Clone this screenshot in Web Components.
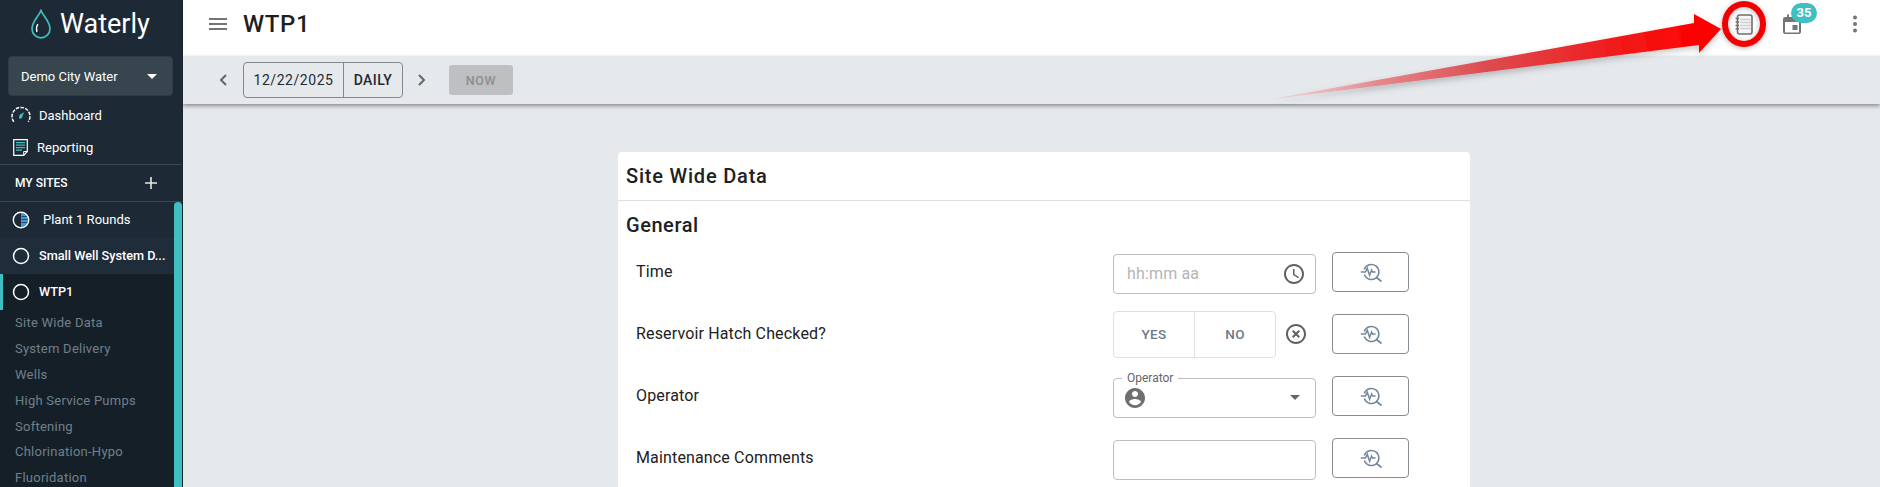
<!DOCTYPE html>
<html>
<head>
<meta charset="utf-8">
<title>Waterly</title>
<style>
  html, body { margin: 0; height: 487px; overflow: hidden; background: #e6e9ec; font-family: Roboto, "Liberation Sans", sans-serif; }
  #shell { display: grid; grid-template-columns: 183px 1fr; height: 487px; position: relative; }
  #main { display: flex; flex-direction: column; min-width: 0; height: 487px; overflow: hidden; }
</style>
</head>
<body>
<div id="shell">
  <app-sidebar>
    <nav-link icon="gauge" pad="11" gap="8">Dashboard</nav-link>
    <nav-link icon="report" pad="13" gap="9">Reporting</nav-link>
    <sites-head>MY SITES</sites-head>
    <site-row icon="half" gap="13">Plant 1 Rounds</site-row>
    <site-row icon="ring" strong hovered>Small Well System D...</site-row>
    <site-row icon="ring" strong active>WTP1</site-row>
    <site-menu>
      <span>Site Wide Data</span>
      <span>System Delivery</span>
      <span>Wells</span>
      <span>High Service Pumps</span>
      <span>Softening</span>
      <span>Chlorination-Hypo</span>
      <span>Fluoridation</span>
    </site-menu>
  </app-sidebar>
  <div id="main">
    <top-bar>WTP1</top-bar>
    <date-bar></date-bar>
    <data-sheet title="Site Wide Data" section="General">
      <form-row label="Time"><time-field></time-field></form-row>
      <form-row label="Reservoir Hatch Checked?"><yes-no></yes-no></form-row>
      <form-row label="Operator"><operator-select></operator-select></form-row>
      <form-row label="Maintenance Comments"><text-box></text-box></form-row>
    </data-sheet>
  </div>
  <callout-arrow></callout-arrow>
</div>

<script>
const icons = {
  gauge: `<svg width="20" height="20" viewBox="0 0 20 20" fill="none"><path d="M2.800 16.800A9 9 0 1 1 17.200 16.800" stroke="#fff" stroke-width="1.500" stroke-dasharray="3.500 1.300"/><path d="M7.800 13l.9-3.300L13 7.200l-1.700 4.500a2 2 0 0 1-3.500 1.300z" fill="#3fbfc1"/></svg>`,
  report: `<svg width="15" height="17" viewBox="0 0 15 17" fill="none"><path d="M.7.7h13.6v11.8l-3.6 3.8H.7z" stroke="#fff" stroke-width="1.2"/><path d="M10.7 16.3v-3.8h3.6" stroke="#fff" stroke-width="1"/><path d="M3 3.7h9M3 6.2h9M3 8.7h9M3 11.2h6" stroke="#3fbfc1" stroke-width="1.2"/></svg>`,
  half: `<svg width="18" height="18" viewBox="0 0 18 18" fill="none"><path d="M9 2v14a7 7 0 0 0 0-14z" fill="#3a9be0"/><path d="M9.500 5.500h7M9.500 8.500h7M9.500 11.500h7" stroke="#1d2a36" stroke-width=".7"/><circle cx="9" cy="9" r="7.700" stroke="#fff" stroke-width="1.400"/></svg>`,
  ring: `<svg width="18" height="18" viewBox="0 0 18 18" fill="none"><circle cx="9" cy="9" r="7.500" stroke="#fff" stroke-width="1.500"/></svg>`,
  clock: `<svg width="24" height="24" viewBox="0 0 24 24" fill="#616161"><path d="M11.99 2C6.47 2 2 6.48 2 12s4.47 10 9.99 10C17.52 22 22 17.52 22 12S17.52 2 11.99 2zM12 20c-4.42 0-8-3.58-8-8s3.58-8 8-8 8 3.58 8 8-3.58 8-8 8z"/><path d="M12.5 7H11v6l5.25 3.15.75-1.23-4.5-2.67z"/></svg>`,
  clear: `<svg width="24" height="24" viewBox="0 0 24 24" fill="#616161"><path d="M14.59 8L12 10.59 9.41 8 8 9.41 10.59 12 8 14.59 9.41 16 12 13.41 14.59 16 16 14.59 13.41 12 16 9.41 14.59 8zM12 2C6.47 2 2 6.47 2 12s4.47 10 10 10 10-4.47 10-10S17.53 2 12 2zm0 18c-4.41 0-8-3.59-8-8s3.59-8 8-8 8 3.59 8 8-3.59 8-8 8z"/></svg>`,
  person: `<svg width="24" height="24" viewBox="0 0 24 24" fill="#6f6f6f"><path d="M12 2C6.48 2 2 6.48 2 12s4.48 10 10 10 10-4.48 10-10S17.52 2 12 2zm0 3c1.66 0 3 1.34 3 3s-1.34 3-3 3-3-1.34-3-3 1.34-3 3-3zm0 14.2c-2.5 0-4.71-1.28-6-3.22.03-1.99 4-3.08 6-3.08 1.99 0 5.97 1.09 6 3.08-1.29 1.94-3.5 3.22-6 3.22z"/></svg>`,
  trend: `<svg width="22" height="20" viewBox="0 0 22 20" fill="none" stroke="#74879a" stroke-width="1.500"><path d="M4.300 7.500A7.500 7.500 0 1 1 4.300 12.500"/><path d="M.8 10h4.700l1.800-3.800 2.300 7 2-5.200 1 2h3"/><path d="M16.500 15.500L21.500 19.500" stroke-width="1.700"/></svg>`,
  notebook: `<svg width="18" height="21" viewBox="0 0 18 21" fill="none"><rect x="2.500" y="1" width="14.500" height="19" rx="2" fill="#f6f6f6" stroke="#6f6f6f" stroke-width="1.600"/><path d="M5 5.500h11M5 8.500h11M5 11.500h11M5 14.500h11" stroke="#cfcfcf" stroke-width="1.300"/><path d="M.5 4.500h3.500M.5 8h3.500M.5 11.500h3.500M.5 15h3.500" stroke="#6f6f6f" stroke-width="1.600" stroke-dasharray="2 .5"/></svg>`,
  calendar: `<svg width="18" height="21" viewBox="0 0 18 21" fill="#757575"><path d="M4 .5h2v2.500h6V.5h2v2.500h2a2 2 0 0 1 2 2v13a2 2 0 0 1-2 2H2a2 2 0 0 1-2-2V5a2 2 0 0 1 2-2h2zM2 8v10.500h14V8z"/><rect x="9.500" y="11" width="5" height="5"/></svg>`,
  kebab: `<svg width="6" height="18" viewBox="0 0 6 18" fill="#757575"><circle cx="3" cy="2.500" r="2"/><circle cx="3" cy="9" r="2"/><circle cx="3" cy="15.500" r="2"/></svg>`
};

function define(name, css, html) {
  customElements.define(name, class extends HTMLElement {
    connectedCallback() {
      if (this.shadowRoot) return;
      this.attachShadow({ mode: "open" });
      const body = typeof html === "function" ? html(this) : html;
      this.shadowRoot.innerHTML = `<style>${css}</style>${body}`;
    }
  });
}

define("app-sidebar", `
  :host { display: block; position: relative; height: 487px; overflow: hidden; background: #1d2a36; color: #fff; border-right: 1px solid #1a2530; box-sizing: border-box; }
  .logo { height: 56px; display: flex; align-items: flex-start; padding: 9px 0 0 31px; box-sizing: border-box; gap: 9px; }
  .logo b { font-weight: 400; font-size: 27px; line-height: 30px; margin-top: 0; }
  .org { margin: 0 9px 3px 8px; height: 40px; background: #37454e; border-radius: 4px; display: flex; align-items: center; justify-content: space-between; padding: 0 15px 0 12px; font-size: 13px; font-weight: 400; border: 1px solid #2f3c46; box-sizing: border-box; }
  .org i { width: 0; height: 0; border: 5px solid transparent; border-top: 5px solid #fff; border-bottom: 0; }
  .thumb { position: absolute; left: 174px; top: 202px; bottom: 0; width: 8px; background: #3fbfc1; border-radius: 4px 4px 0 0; }
`, `
  <div class="logo">
    <svg width="20" height="30" viewBox="0 0 20 30" fill="none"><path d="M10 1.500C8 7 1 12.500 1 19.800a9 9 0 0 0 18 0C19 12.500 12 7 10 1.500z" stroke="#3fbfc1" stroke-width="1.700"/><path d="M6 23c-.9-2.500-.6-5.500.8-8" stroke="#fff" stroke-width="1.300"/></svg>
    <b>Waterly</b>
  </div>
  <div class="org">Demo City Water<i></i></div>
  <slot></slot>
  <div class="thumb"></div>
`);

define("nav-link", `
  :host { display: flex; align-items: center; height: 32.500px; font-size: 13px; font-weight: 400; color: #fff; width: 174px; }
  svg { display: block; flex: none; }
`, (el) => `<span style="display:flex;padding-left:${el.getAttribute("pad")}px;margin-right:${el.getAttribute("gap")}px">${icons[el.getAttribute("icon")]}</span><slot></slot>`);

define("sites-head", `
  :host { display: flex; align-items: center; justify-content: space-between; height: 36px; border-top: 1px solid #3a4650; border-bottom: 1px solid #3a4650; padding: 0 24px 0 15px; font-size: 12px; font-weight: 500; }
  svg { display: block; }
`, `<slot></slot><svg width="14" height="14" viewBox="0 0 14 14"><path d="M7 1v12M1 7h12" stroke="#e8e8e8" stroke-width="1.600"/></svg>`);

define("site-row", `
  :host { display: flex; align-items: center; height: 36px; width: 174px; box-sizing: border-box; padding: 0 0 1px 12px; font-size: 13px; font-weight: 400; color: #fff; white-space: nowrap; }
  :host([strong]) { font-weight: 500; font-size: 12.700px; }
  :host([hovered]) { background: #1f2c3a; }
  :host([active]) { background: #151f27; box-shadow: inset 3px 0 0 #3fbfc1; }
  span { display: flex; flex: none; }
`, (el) => `<span style="margin-right:${el.getAttribute("gap") || 9}px">${icons[el.getAttribute("icon")]}</span><slot></slot>`);

define("site-menu", `
  :host { display: block; background: #151f27; width: 174px; height: 177px; box-sizing: border-box; }
  ::slotted(span) { display: flex; align-items: center; height: 25.800px; padding-left: 15px; font-size: 13px; letter-spacing: .25px; color: #6f808c; }
`, `<slot></slot>`);

define("top-bar", `
  :host { display: flex; align-items: center; flex: none; height: 56px; box-sizing: border-box; padding: 0 0 8px 26px; background: #fff; position: relative; }
  .title { font-size: 24px; font-weight: 500; color: #1f1f1f; letter-spacing: .55px; margin-left: 16px; }
  .tools { margin-left: auto; display: flex; align-items: center; }
  .tool { display: flex; position: relative; }
  .badge { position: absolute; left: 8px; top: -11px; width: 26px; height: 20px; border-radius: 10px; background: #3fbfc1; color: #fff; font-size: 13px; font-weight: 700; display: flex; align-items: center; justify-content: center; }
  svg { display: block; }
`, `
  <svg width="18" height="12" viewBox="0 0 18 12" fill="#757575"><path d="M0 0h18v2H0zM0 5h18v2H0zM0 10h18v2H0z"/></svg>
  <span class="title"><slot></slot></span>
  <div class="tools">
    <span class="tool" style="margin-right:30px">${icons.notebook}</span>
    <span class="tool" style="margin-right:51px">${icons.calendar}<span class="badge">35</span></span>
    <span class="tool" style="margin-right:22px">${icons.kebab}</span>
  </div>
`);

define("date-bar", `
  :host { display: flex; align-items: center; flex: none; height: 48px; background: #e6e9ec; padding-left: 36px; box-shadow: 0 2px 4px rgba(0,0,0,.4); position: relative; box-sizing: border-box; }
  .range { display: flex; height: 36px; box-sizing: border-box; margin: 0 15px 0 16px; border: 1px solid #83898e; border-radius: 4px; font-size: 14px; color: #1f2a33; align-items: stretch; }
  .range span { display: flex; align-items: center; justify-content: center; }
  .date { width: 99px; border-right: 1px solid #83898e; letter-spacing: .55px; }
  .mode { width: 58px; font-weight: 500; font-size: 14px; letter-spacing: .4px; }
  .now { margin-left: 23px; width: 64px; height: 30px; border-radius: 3px; background: #bdbfc1; color: #8c8e90; font-size: 12.500px; font-weight: 500; letter-spacing: .6px; display: flex; align-items: center; justify-content: center; }
  svg { display: block; }
`, `
  <svg width="8" height="12" viewBox="0 0 8 12" fill="none"><path d="M7 1L2 6l5 5" stroke="#666" stroke-width="2"/></svg>
  <div class="range"><span class="date">12/22/2025</span><span class="mode">DAILY</span></div>
  <svg width="8" height="12" viewBox="0 0 8 12" fill="none"><path d="M1 1l5 5-5 5" stroke="#666" stroke-width="2"/></svg>
  <div class="now">NOW</div>
`);

define("data-sheet", `
  :host { display: block; flex: none; width: 852px; margin: 48px 0 0 435px; background: #fff; border-radius: 4px 4px 0 0; color: #212121; height: 360px; }
  h2, h3 { margin: 0; font-weight: 500; font-size: 20px; padding-left: 8px; }
  h2 { height: 48px; line-height: 48px; border-bottom: 1px solid #e0e0e0; letter-spacing: .8px; }
  h3 { height: 40px; line-height: 48px; letter-spacing: .55px; }
`, (el) => `<h2>${el.getAttribute("title")}</h2><h3>${el.getAttribute("section")}</h3><slot></slot>`);

define("form-row", `
  :host { display: grid; grid-template-columns: 477px 219px 77px; align-items: center; height: 62px; padding-left: 18px; font-size: 16px; letter-spacing: .15px; color: #212121; }
  .label { margin-bottom: 2px; }
  .cell { display: flex; }
  button { display: flex; align-items: center; justify-content: center; width: 77px; height: 40px; padding: 0; background: #fff; border: 1px solid #868e94; border-radius: 4px; }
  svg { display: block; }
`, (el) => `<div class="label">${el.getAttribute("label")}</div><div class="cell"><slot></slot></div><button>${icons.trend}</button>`);

const boxCss = `
  :host { display: flex; align-items: center; width: 203px; height: 40px; margin-top: 3px; box-sizing: border-box; border: 1px solid #bdbdbd; border-radius: 4px; position: relative; }
  svg { display: block; }
`;

define("time-field", boxCss + `
  :host { justify-content: space-between; padding: 0 9px 0 13px; }
  span { color: #b5b5b5; font-size: 16px; }
`, `<span>hh:mm aa</span>${icons.clock}`);

define("text-box", boxCss, ``);

define("operator-select", boxCss + `
  :host { padding: 0 15px 0 9px; justify-content: space-between; }
  label { position: absolute; left: 8px; top: -8px; background: #fff; padding: 0 5px; font-size: 12px; line-height: 14px; color: #666; letter-spacing: 0; }
  i { width: 0; height: 0; border: 5px solid transparent; border-top: 5px solid #666; border-bottom: 0; }
`, `<label>Operator</label>${icons.person}<i></i>`);

define("yes-no", `
  :host { display: flex; align-items: center; }
  .pair { display: flex; width: 163px; height: 47px; box-sizing: border-box; border: 1px solid #e0e0e0; border-radius: 4px; font-size: 13.500px; font-weight: 500; letter-spacing: .4px; color: #6d7a85; }
  .pair span { flex: 1; display: flex; align-items: center; justify-content: center; }
  .pair span + span { border-left: 1px solid #e0e0e0; }
  .x { display: flex; margin-left: 8px; }
`, `<div class="pair"><span>YES</span><span>NO</span></div><span class="x">${icons.clear}</span>`);

define("callout-arrow", `
  :host { position: absolute; left: 1250px; top: 0; width: 530px; height: 110px; pointer-events: none; }
  svg { display: block; overflow: visible; }
`, `
  <svg width="530" height="110" viewBox="0 0 530 110" fill="none">
    <defs>
      <linearGradient id="fade" x1="16" y1="100" x2="450" y2="30" gradientUnits="userSpaceOnUse">
        <stop offset="0" stop-color="#f2b8bb" stop-opacity=".3"/>
        <stop offset=".25" stop-color="#e58a8e"/>
        <stop offset=".5" stop-color="#dc4d52"/>
        <stop offset=".8" stop-color="#f01c1c"/>
        <stop offset="1" stop-color="#ff0000"/>
      </linearGradient>
      <filter id="soft" x="-5%" y="-20%" width="110%" height="160%"><feDropShadow dx="0" dy="3" stdDeviation="3" flood-color="#000" flood-opacity=".22"/></filter>
      <filter id="halo" x="-30%" y="-30%" width="160%" height="160%"><feDropShadow dx="0" dy="1" stdDeviation="2.500" flood-color="#000" flood-opacity=".3"/></filter>
    </defs>
    <path d="M16 100L444 23 444 14 471 29 449 53 449 45z" fill="url(#fade)" filter="url(#soft)"/>
    <ellipse cx="494" cy="24" rx="19" ry="20" stroke="#f00000" stroke-width="6" filter="url(#halo)"/>
  </svg>
`);
</script>
</body>
</html>
